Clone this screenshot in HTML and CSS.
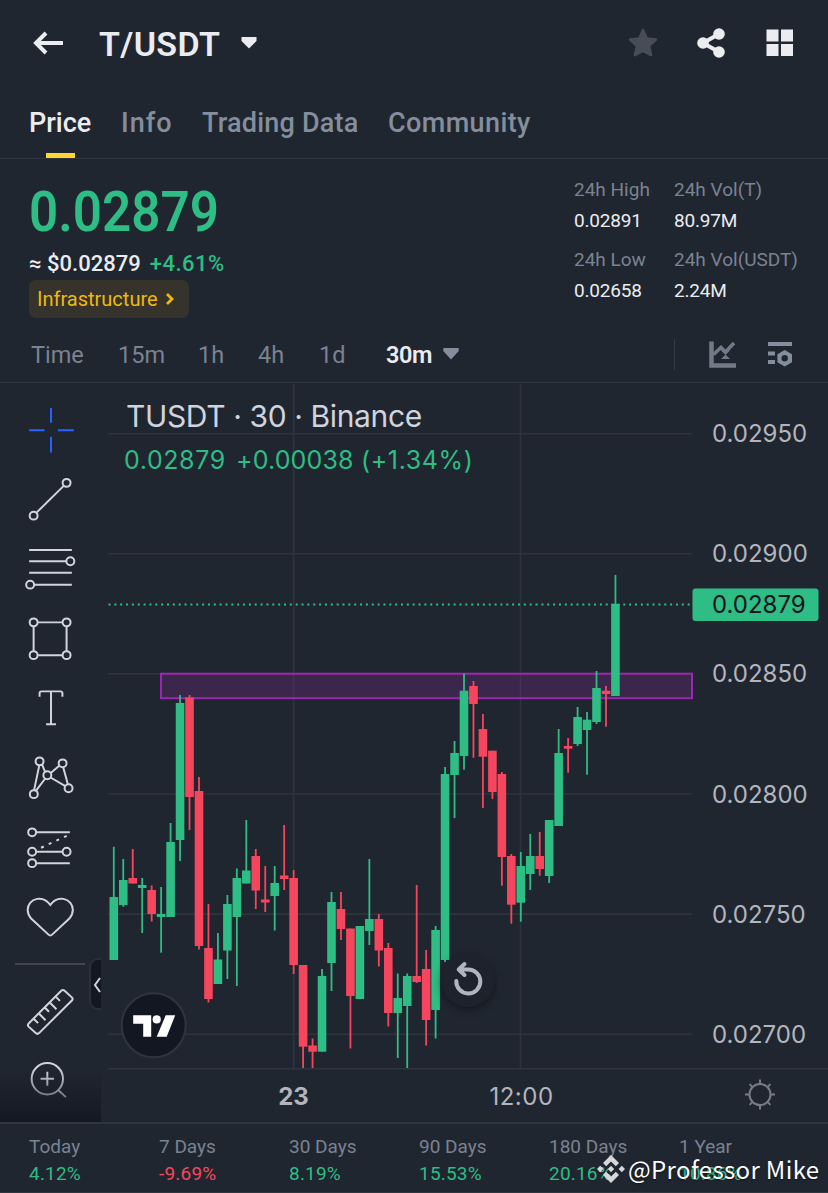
FILE: index.html
```html
<!DOCTYPE html>
<html lang="en">
<head>
  <meta charset="UTF-8" />
  <meta name="viewport" content="width=device-width, initial-scale=1.0"/>
  <title>T/USDT</title>
  <link rel="stylesheet" href="styles.css">
</head>
<body>

  <!-- Top bar -->
  <header class="topbar">
    <svg class="back" width="30" height="24" viewBox="0 0 30 24"><path d="M13 2 3 12l10 10M3 12h27" fill="none" stroke="#eaecef" stroke-width="4"/></svg>
    <h1>T/USDT</h1>
    <svg class="caret" width="16" height="12" viewBox="0 0 16 12"><path d="M.5 0h15v4L8 11.5.5 4z" fill="#eaecef"/></svg>
    <div class="actions">
      <svg width="30" height="30" viewBox="0 0 30 30"><path d="M15 2l3.800 8.600 9.200 1-6.900 6.300 2 9.200-8.100-4.300-8.100 4.300 2-9.200L2 11.600l9.200-1z" fill="#474d57" stroke="#474d57" stroke-width="2.500" stroke-linejoin="round"/></svg>
      <svg width="30" height="30" viewBox="0 0 30 30"><path d="M23 6 7 15l16 9" fill="none" stroke="#eaecef" stroke-width="4"/><circle cx="7" cy="15" r="5.800" fill="#eaecef"/><circle cx="23" cy="6" r="5.800" fill="#eaecef"/><circle cx="23" cy="24" r="5.800" fill="#eaecef"/></svg>
      <svg width="28" height="28" viewBox="0 0 28 28"><path d="M.5.5h12v12H.5zM15 .5h12v12H15zM.5 15h12v12H.5zM15 15h12v12H15z" fill="#eaecef"/></svg>
    </div>
  </header>

  <nav class="tabs">
    <a class="tab active tab-price">Price</a>
    <a class="tab tab-info">Info</a>
    <a class="tab tab-data">Trading Data</a>
    <a class="tab tab-community">Community</a>
  </nav>

  <!-- Price summary -->
  <section class="summary">
    <div class="price-box">
      <div class="price">0.02879</div>
      <div class="price-sub"><span class="fiat">≈ $0.02879</span><span class="change">+4.61%</span></div>
      <a class="tag"><span>Infrastructure</span><svg width="10" height="14" viewBox="0 0 10 14"><path d="M2 2l5 5-5 5" fill="none" stroke="#f0b90b" stroke-width="2.800"/></svg></a>
    </div>
    <dl class="stats">
      <div><dt>24h High</dt><dd>0.02891</dd></div>
      <div><dt>24h Vol(T)</dt><dd>80.97M</dd></div>
      <div><dt>24h Low</dt><dd>0.02658</dd></div>
      <div><dt>24h Vol(USDT)</dt><dd>2.24M</dd></div>
    </dl>
  </section>

  <!-- Intervals -->
  <div class="intervals">
    <div class="interval-list">
      <span>Time</span>
      <span>15m</span>
      <span>1h</span>
      <span>4h</span>
      <span>1d</span>
      <span class="current">30m</span>
    </div>
    <svg class="caret-sm" width="16" height="12" viewBox="0 0 16 12"><path d="M.3 0h15.400v3L8 11.500.3 3z" fill="#848e9c"/></svg>
    <div class="interval-tools">
      <svg width="27" height="27" viewBox="0 0 27 27"><path d="M2.500.5v24H27" fill="none" stroke="#737a87" stroke-width="4.500"/><path d="M4.500 13.500 12 6.500l4.500 4.500 8.500-9" fill="none" stroke="#737a87" stroke-width="3.500"/><path d="M12 9.500h9l-4.500 4.500zM12 18h9l-4.500-4.500z" fill="#737a87"/></svg>
      <svg width="25" height="26" viewBox="0 0 25 26"><path d="M0 1h24v4H0zM0 10.500h7v4H0zM0 19h7v4H0z" fill="#848e9c"/><path d="M16.700 9l7.300 4.200v8L16.700 25.500l-7.300-4.300v-8z" fill="#848e9c"/><circle cx="16.700" cy="17.200" r="3.200" fill="#202630"/></svg>
    </div>
  </div>

  <!-- Chart -->
  <main class="chart">
    <aside class="tools">
      <svg viewBox="-35 -35 70 70"><path class="blue" d="M1-22v15M1 7v16M-21 .5h15.500M8 .5h16"/></svg>
      <svg viewBox="-35 -35 70 70"><path d="M-13.600 13 13.800-14"/><circle cx="16.700" cy="-17" r="4"/><circle cx="-16.500" cy="16" r="4"/></svg>
      <svg viewBox="-35 -35 70 70"><path d="M-21-19h43M-21-7.500h37.500M-21 4h43M-16 16h38"/><circle cx="20.500" cy="-7.500" r="4"/><circle cx="-20" cy="16" r="4"/></svg>
      <svg viewBox="-35 -35 70 70"><path d="M-12-16.500h24.500M-12 16.500h24.500M-16.500-12.500v25M16.700-12.500v25"/><circle cx="-16.500" cy="-16.500" r="4"/><circle cx="16.700" cy="-16.500" r="4"/><circle cx="-16.500" cy="16.500" r="4"/><circle cx="16.700" cy="16.500" r="4"/></svg>
      <svg viewBox="-35 -35 70 70"><path d="M-10.500-11v-3.500q0-2 2-2h19q2 0 2 2V-11M1-16.500v33M-4 16.500H6"/></svg>
      <svg viewBox="-35 -35 70 70"><path d="M-10.800-12.500-16 12.500M-8-13.500l3 7.500M-5 1-14 13M1-5 9.300-12M1 0 15.500 8.500M13.300-10.500 18 6.500"/><circle cx="-10.500" cy="-16.500" r="4"/><circle cx="12.700" cy="-14.500" r="4"/><circle cx="-2.700" cy="-2.500" r="4"/><circle cx="-16.300" cy="16.500" r="4"/><circle cx="18.700" cy="10.500" r="4"/></svg>
      <svg viewBox="-35 -35 70 70"><path d="M-14-14.500h34M-14 5h26.500M-14 16.500h34"/><path d="M-9 1 18-11.500" stroke-dasharray="3 5.500"/><circle cx="-18" cy="-14.500" r="4"/><circle cx="-18" cy="5" r="4"/><circle cx="16.700" cy="5" r="4"/><circle cx="-18" cy="16.500" r="4"/></svg>
      <svg viewBox="-35 -35 70 70"><path d="M.3-12C-4-18-10-18.500-13-18c-6 1-9.500 6-9.500 11 0 4 1.500 6.500 3.500 8.800L-1.500 18q1.800 1.600 3.600 0L19.500 1.800C21.500-.5 23-3 23-7c0-5-3.500-10-9.500-11-3-.5-9 0-13.200 6z"/></svg>
      <hr>
      <svg viewBox="-35 -35 70 70"><path d="M11.300-21.200q1.700-1.500 3.400 0L22-14.500q1.500 1.500 0 3.200L-11 21.500q-1.700 1.500-3.400 0L-21.500 15q-1.500-1.600 0-3.200zM-16 7.500l4 4M-11 2l6.500 6.500M-5-4l4 4M0-9l6.500 6.500M6-15l4 4"/></svg>
      <svg viewBox="-35 -35 70 70"><circle cx="-2.700" cy="-3" r="15.800"/><path d="M-9.500-3H4M-2.700-10V4M8.500 8.500 16 15.500"/></svg>
      <div class="tools-fade"></div>
      <div class="tools-toggle"><svg viewBox="0 0 8 16"><path d="M7 1 2 8l5 7"/></svg></div>
    </aside>

    <svg class="plot" width="727" height="738" viewBox="101 384 727 738">
      <g class="grid">
        <path d="M108 433.700h584M108 553.800h584M108 673.900h584M108 794h584M108 914.100h584M108 1034.200h584"/>
        <path d="M293.600 384v684M520.500 384v684M108 1068.800h720"/>
      </g>
      <rect class="zone" x="161" y="673.700" width="531" height="24.500"/>
      <g id="candles"></g>
      <path class="last-line" d="M108.500 604.500H692"/>

      <text class="symbol" x="126" y="427">TUSDT · 30 · Binance</text>
      <text class="quote" x="124" y="468.500">0.02879</text>
      <text class="quote plus" x="236" y="468.500">+0.00038</text>
      <text class="quote" x="361" y="468.500">(+1.34%)</text>

      <g class="scale">
        <text x="712" y="442">0.02950</text>
        <text x="712" y="562">0.02900</text>
        <text x="712" y="682">0.02850</text>
        <text x="712" y="803">0.02800</text>
        <text x="712" y="923">0.02750</text>
        <text x="712" y="1043">0.02700</text>
      </g>
      <rect x="692.500" y="588.500" width="126" height="32.500" rx="3" fill="#2ebd85"/>
      <text class="last" x="712" y="613">0.02879</text>
      <text class="day" x="293.500" y="1105">23</text>
      <text class="hour" x="521.500" y="1105">12:00</text>

      <!-- axis settings -->
      <g class="gear" transform="translate(760 1094.500)">
        <circle r="10.500"/>
        <path d="M0-10.500V-15M0 10.500V15M-10.500 0H-15M10.500 0H15M-7.400-7.400l-3-3M7.400-7.400l3-3M-7.400 7.400l-3 3M7.400 7.400l3 3"/>
      </g>

      <!-- chart logo -->
      <g transform="translate(153.700 1025.300)">
        <circle r="32" fill="#131722" stroke="#2f3440" stroke-width="2"/>
        <path d="M-20.500-10h18v21.500h-8V-1.500h-10zM12-10h9.500L13 11.500H3z" fill="#fff"/>
        <circle cx="3" cy="-5.900" r="4.100" fill="#fff"/>
      </g>

      <!-- reset view -->
      <g class="reset" transform="translate(468 980)">
        <circle class="reset-bg" r="27"/>
        <path d="M-11.700 1A12 12 0 1 0 0-10.500H-9M-3.500-16-9.300-10.500l5.800 5.500"/>
      </g>
    </svg>
  </main>

  <!-- Performance -->
  <footer class="performance">
    <div><span>Today</span><b class="up">4.12%</b></div>
    <div><span>7 Days</span><b class="down">-9.69%</b></div>
    <div><span>30 Days</span><b class="up">8.19%</b></div>
    <div><span>90 Days</span><b class="up">15.53%</b></div>
    <div><span>180 Days</span><b class="up">20.16%</b></div>
    <div><span>1 Year</span><b class="up">10.86%</b></div>
  </footer>

  <div class="credit">
    <svg width="28" height="28" viewBox="0 0 28 28"><path d="M14 0l8 8-3.200 3.200L14 6.400 9.200 11.200 6 8zM14 28l8-8-3.200-3.200-4.800 4.800-4.800-4.800L6 20zM14 10.800l3.200 3.200-3.200 3.200-3.200-3.200zM3.200 10.800 6.400 14l-3.200 3.200L0 14zM24.800 10.800 28 14l-3.200 3.200-3.200-3.200z" fill="#d5d7da"/></svg>
    <span>@Professor Mike</span>
  </div>

  <script src="script.js"></script>
</body>
</html>
```
FILE: styles.css
```css
* {
  box-sizing: border-box;
}

body {
  margin: 0;
  width: 828px;
  height: 1193px;
  overflow: hidden;
  position: relative;
  background: #202630;
  color: #eaecef;
  font-family: Roboto, "Liberation Sans", sans-serif;
}

svg {
  display: block;
  flex: none;
}

/* Top bar */
.topbar {
  height: 85px;
  display: flex;
  align-items: center;
  padding: 0 34px 0 33px;
}

.topbar h1 {
  margin: 2px 0 0 36px;
  width: 142px;
  font-size: 34px;
  font-weight: 600;
  letter-spacing: .4px;
}

.actions {
  margin-left: auto;
  display: flex;
  align-items: center;
  gap: 39px;
}

.actions svg:nth-child(2) {
  margin-right: 1px;
  margin-left: -1px;
}

/* Tabs */
.tabs {
  height: 74px;
  display: flex;
  padding-left: 29px;
  border-bottom: 1px solid #2d333d;
}

.tab {
  position: relative;
  padding-top: 22px;
  font-size: 27px;
  line-height: 32px;
  font-weight: 500;
  letter-spacing: .2px;
  color: #848e9c;
  white-space: nowrap;
}

.tab-price {
  width: 92px;
  letter-spacing: 0;
}

.tab-info {
  width: 81px;
  letter-spacing: 1px;
}

.tab-data { width: 186px; }
.tab-community { letter-spacing: .4px; }

.tab.active {
  color: #eaecef;
}

.tab.active::after {
  content: "";
  position: absolute;
  left: 17px;
  bottom: 0;
  width: 29px;
  height: 5px;
  background: #fcd535;
}

/* Summary */
.summary {
  height: 169px;
  display: flex;
  justify-content: space-between;
  padding: 19px 0 0 29px;
}

.price {
  height: 68px;
  font-size: 55px;
  line-height: 68px;
  font-weight: 600;
  color: #2ebd85;
  transform: scaleX(.93);
  transform-origin: 0 0;
}

.price-sub {
  height: 34px;
  display: flex;
  gap: 9px;
  font-size: 22px;
  line-height: 35px;
  font-weight: 500;
}

.change {
  letter-spacing: .5px;
  color: #2ebd85;
}

.tag {
  display: flex;
  align-items: center;
  gap: 7px;
  width: 160px;
  height: 38px;
  padding-left: 8px;
  border-radius: 7px;
  background: #35332c;
  color: #f0b90b;
  font-size: 20px;
}

.stats {
  margin: 0;
  width: 254px;
  display: grid;
  grid-template-columns: 100px 154px;
  grid-auto-rows: 70px;
  font-size: 19px;
}

.stats dt {
  height: 27px;
  line-height: 24px;
  color: #7b8290;
  white-space: nowrap;
}

.stats dd {
  margin: 0;
  padding-top: 4px;
  line-height: 24px;
  letter-spacing: -.2px;
}

/* Intervals */
.intervals {
  height: 55px;
  display: flex;
  align-items: center;
  padding: 0 35px 2px 31px;
  border-bottom: 1px solid #2d333d;
  font-size: 23.500px;
  color: #7b8290;
}

.interval-list {
  display: grid;
  grid-template-columns: 87px 80px 60px 61px 67px 57px;
  padding-top: 2px;
}

.current {
  color: #eaecef;
  font-weight: 600;
  letter-spacing: -.4px;
}

.interval-tools {
  margin-left: auto;
  height: 31px;
  display: flex;
  align-items: center;
  gap: 32px;
  padding-left: 34px;
  border-left: 1px solid #363c47;
}

/* Chart */
.chart {
  height: 738px;
  display: flex;
  margin-top: 1px;
}

.tools {
  position: relative;
  width: 101px;
  padding-top: 11px;
}

.tools > svg {
  width: 70px;
  height: 69.500px;
  margin-left: 15px;
}

.tools svg {
  fill: none;
  stroke: #d1d4dc;
  stroke-width: 2;
}

.tools svg .blue {
  stroke: #2962ff;
}

.tools hr {
  width: 70px;
  height: 2px;
  margin: 12px 0 12px 15px;
  border: 0;
  background: #42454f;
}

.tools-fade {
  position: absolute;
  left: 0;
  bottom: 0;
  width: 101px;
  height: 54px;
  background: linear-gradient(rgba(19, 23, 34, 0), rgba(19, 23, 34, .9));
}

.tools-toggle {
  position: absolute;
  top: 574px;
  right: 0;
  width: 12px;
  height: 52px;
  padding: 17px 0 0 2px;
  border: 2px solid #2a2e39;
  border-right: 0;
  border-radius: 9px 0 0 9px;
  background: #131722;
}

.tools-toggle svg {
  width: 8px;
  height: 16px;
}

.grid path {
  fill: none;
  stroke: #2e333e;
  stroke-width: 1.600;
}

.zone {
  fill: #9c27b0;
  fill-opacity: .22;
  stroke: #9c27b0;
  stroke-width: 2;
}

.last-line {
  stroke: #2ebd85;
  stroke-width: 2;
  stroke-dasharray: 2 3.850;
}

.up { color: #2ebd85; fill: #2ebd85; }
.down { color: #f6465d; fill: #f6465d; }

.plot text {
  font-family: Inter, sans-serif;
}

.symbol {
  font-size: 30px;
  letter-spacing: -.38px;
  fill: #d1d4dc;
}

.quote {
  font-size: 25px;
  fill: #2ebd85;
  letter-spacing: .6px;
}

.plus {
  letter-spacing: .15px;
}

.scale text,
.last,
.hour {
  font-size: 24px;
  fill: #b2b5be;
}

.plot .last {
  fill: #10141b;
}

.day,
.hour {
  text-anchor: middle;
}

.plot .hour {
  letter-spacing: .5px;
}

.day {
  font-size: 24px;
  font-weight: 700;
  fill: #b2b5be;
}

.gear {
  fill: none;
  stroke: #787b86;
  stroke-width: 2;
}

.reset path {
  fill: none;
  stroke: #b2b5be;
  stroke-width: 4;
  stroke-linecap: round;
  stroke-linejoin: round;
}

.reset-bg {
  fill: #1e222d;
  filter: drop-shadow(0 3px 4px rgba(0, 0, 0, .4));
}

/* Performance */
.performance {
  height: 71px;
  display: grid;
  grid-template-columns: repeat(6, 130px);
  padding: 9px 0 0 29px;
  border-top: 2px solid #303641;
  border-bottom: 1px solid #303641;
  font-size: 19px;
  line-height: 27px;
}

.performance span,
.performance b {
  display: block;
  font-weight: 400;
}

.performance b {
  letter-spacing: .2px;
}

.performance span {
  color: #7b8290;
}

.credit {
  position: absolute;
  left: 597px;
  top: 1150px;
  display: flex;
  align-items: center;
  gap: 3px;
  font-family: "Noto Sans CJK SC", sans-serif;
  font-size: 24px;
  line-height: 37px;
  letter-spacing: .35px;
  color: #fff;
  white-space: nowrap;
  text-shadow: 0 1px 2px rgba(0, 0, 0, .6);
}
```
FILE: script.js
```js
// [up, high, body top, body bottom, low]
const candles = [
  [1, 846.7, 897, 960, 960],
  [1, 859, 880, 905, 906.7],
  [0, 849, 878, 883.5, 883.5],
  [1, 878, 885, 888, 933],
  [0, 885.5, 890, 914, 921.5],
  [1, 887, 914, 917, 952.7],
  [1, 823, 842, 917, 917],
  [1, 695, 703, 840, 861],
  [0, 695, 697.5, 797, 830],
  [0, 777, 791, 946, 949.5],
  [0, 904, 948, 999, 1002.5],
  [1, 933, 959.5, 984, 984],
  [1, 895, 904, 950.5, 979],
  [1, 868.5, 878, 917, 986],
  [1, 820, 870.5, 883.5, 883.5],
  [0, 849, 856, 890.5, 909],
  [0, 866, 899.5, 902.5, 912],
  [1, 866, 883, 896, 930.5],
  [0, 825, 875.5, 879, 890],
  [0, 870, 878, 965, 974],
  [0, 965, 965, 1046.7, 1068],
  [0, 1038.5, 1045.5, 1051.7, 1068],
  [1, 969, 976, 1051.7, 1051.7],
  [1, 892, 902, 963, 991],
  [0, 892, 909, 929, 940],
  [0, 928.5, 928.5, 996, 1048.5],
  [1, 926, 926, 999, 999],
  [1, 859, 919, 931, 945],
  [0, 914, 919, 950.5, 966.5],
  [0, 943, 948, 1013, 1026.5],
  [1, 973.5, 998, 1013, 1058],
  [1, 973.5, 976, 1006, 1068],
  [0, 885, 976, 982, 983],
  [0, 950, 969, 1020, 1045.5],
  [1, 926, 930, 1010, 1038.5],
  [1, 767, 774, 960, 962],
  [1, 741, 753, 775, 818],
  [1, 673.7, 690.7, 756, 769.7],
  [0, 681, 686, 704, 757.7],
  [0, 714, 729, 756.7, 808],
  [0, 750.7, 750.7, 792, 799],
  [0, 772, 774, 857, 885.7],
  [0, 854, 856, 904.7, 923.7],
  [1, 852, 866, 902.7, 921.7],
  [1, 834, 856, 874, 890],
  [0, 832, 856, 869, 875.7],
  [1, 820, 820, 876, 883],
  [1, 729, 753, 826, 826],
  [0, 738, 746, 748.7, 772.7],
  [1, 707, 717, 744, 746],
  [1, 712, 719.7, 730, 774.7],
  [1, 671, 688, 722, 724],
  [0, 686, 690.7, 694, 726.7],
  [1, 575, 604, 696, 696]
];

const firstX = 113.8;
const step = 9.465;

function addRect(cls, x, y, width, height) {
  const rect = document.createElementNS("http://www.w3.org/2000/svg", "rect");
  rect.setAttribute("class", cls);
  rect.setAttribute("x", x);
  rect.setAttribute("y", y);
  rect.setAttribute("width", width);
  rect.setAttribute("height", height);
  document.getElementById("candles").appendChild(rect);
}

candles.forEach(([up, high, top, bottom, low], i) => {
  const x = firstX + i * step;
  const cls = up ? "up" : "down";
  addRect(cls, x - 0.9, high, 1.8, low - high);
  addRect(cls, x - 4.3, top, 8.6, bottom - top);
});
```
